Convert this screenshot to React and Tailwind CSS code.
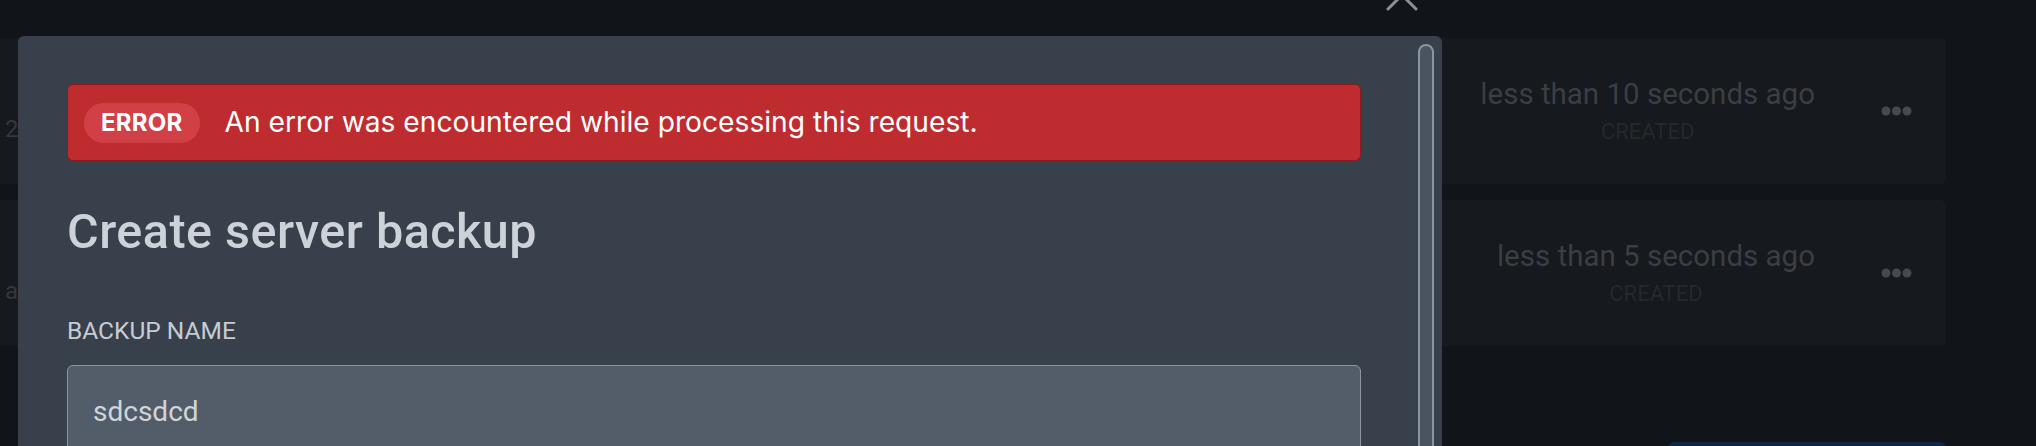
import React from "react";

function Dots() {
  return (
    <svg width="31" height="10" viewBox="0 0 31 10" className="shrink-0">
      <circle cx="5" cy="5" r="4.5" fill="#46494e" />
      <circle cx="15.5" cy="5" r="4.5" fill="#46494e" />
      <circle cx="26" cy="5" r="4.5" fill="#46494e" />
    </svg>
  );
}

function BackupCard({ name, time }) {
  return (
    <div className="h-[146px] bg-[#16191d] rounded-r-[6px] flex items-center pl-[5px] pr-[34px]">
      <div className="flex-1 self-stretch pt-[75px] text-[24px] leading-[32px] text-[#34373c]" style={{ fontFamily: "Roboto, sans-serif" }}>
        {name}
      </div>
      <div className="flex flex-col items-center mr-[66px]" style={{ fontFamily: "Roboto, sans-serif" }}>
        <div className="text-[29.5px] leading-[36px] text-[#3b3e43]">{time}</div>
        <div className="mt-[6px] text-[22px] leading-[28px] text-[#25282d] uppercase">Created</div>
      </div>
      <Dots />
    </div>
  );
}

export default function App() {
  return (
    <div className="relative w-[2036px] h-[446px] overflow-hidden bg-[#111418]">
      {/* background page */}
      <div className="pt-[38px] pr-[90px] flex flex-col gap-[16px]">
        <BackupCard name="2a" time="less than 10 seconds ago" />
        <BackupCard name="ad" time="less than 5 seconds ago" />
        <div className="flex justify-end mt-[80px]">
          <div className="w-[278px] h-[40px] rounded-[6px] bg-[#0c2748]" />
        </div>
      </div>

      {/* modal */}
      <div className="absolute left-[18px] top-[36px] w-[1424px] h-[420px] bg-[#37404b] rounded-[6px] flex">
        <svg
          className="absolute left-[1368px] top-[-57px]"
          width="32"
          height="32"
          viewBox="0 0 32 32"
          fill="none"
          stroke="#8c8f94"
          strokeWidth="3"
          strokeLinecap="round"
        >
          <path d="M2 2 L30 30 M30 2 L2 30" />
        </svg>

        <div className="flex-1 pl-[49px] pt-[48px] pr-[57px]">
          <div
            className="h-[77px] bg-[#bf2c2f] border-[1.5px] border-[#8a1a1e] rounded-[6px] flex items-center pl-[16px]"
            style={{ fontFamily: "Inter, sans-serif" }}
          >
            <span className="h-[40px] px-[17px] rounded-full bg-[#d04046] flex items-center text-[24px] font-bold text-white tracking-[0.01em]">
              ERROR
            </span>
            <span className="ml-[25px] text-[28.2px] text-white">
              An error was encountered while processing this request.
            </span>
          </div>

          <h2
            className="mt-[43px] text-[48.5px] leading-[56px] font-medium text-[#cdd2d9] tracking-[0.01em]"
            style={{ fontFamily: "Roboto, sans-serif" }}
          >
            Create server backup
          </h2>

          <div
            className="mt-[55px] text-[24.5px] leading-[32px] text-[#c6ccd4] uppercase"
            style={{ fontFamily: "Roboto, sans-serif" }}
          >
            Backup name
          </div>

          <div
            className="mt-[18px] h-[94px] border border-[#8d96a0] bg-[#535d6a] rounded-[6px] flex items-center px-[25px] text-[28px] text-[#d1d5db]"
            style={{ fontFamily: "Roboto, sans-serif" }}
          >
            sdcsdcd
          </div>
        </div>

        <div className="w-[16px] mt-[8px] mr-[8px] self-stretch rounded-full border-2 border-[#8b95a1] bg-[#4a5461]" />
      </div>
    </div>
  );
}
